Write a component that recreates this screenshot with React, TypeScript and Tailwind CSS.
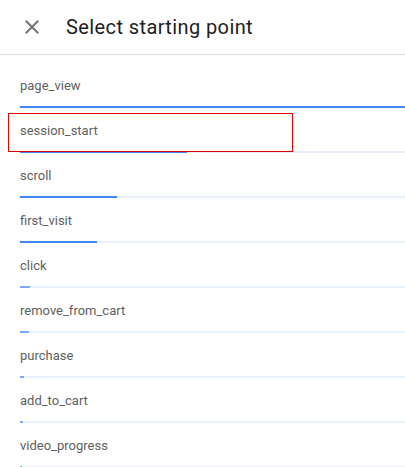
import { useState } from "react";

type EventRow = {
  name: string;
  fill: number;
};

const events: EventRow[] = [
  { name: "page_view", fill: 385 },
  { name: "session_start", fill: 167 },
  { name: "scroll", fill: 97 },
  { name: "first_visit", fill: 77 },
  { name: "click", fill: 10 },
  { name: "remove_from_cart", fill: 9 },
  { name: "purchase", fill: 4 },
  { name: "add_to_cart", fill: 3 },
  { name: "video_progress", fill: 2 },
];

const CloseIcon = () => (
  <svg viewBox="0 0 24 24" className="h-6 w-6 fill-[#757575]">
    <path d="M19 6.41 17.59 5 12 10.59 6.41 5 5 6.41 10.59 12 5 17.59 6.41 19 12 13.41 17.59 19 19 17.59 13.41 12z" />
  </svg>
);

const EventItem = ({ row, active }: { row: EventRow; active: boolean }) => (
  <div className="relative flex flex-col pt-[13px] pl-5">
    {active && (
      <div className="pointer-events-none absolute left-2 top-[5px] h-[39px] w-[285px] border border-[#e00000]" />
    )}
    <span className="h-5 text-[13px] leading-5 text-[#616161]">{row.name}</span>
    <div className="mt-[10px] h-[2px] w-full bg-[#e8f0fe]">
      <div
        className={row.fill < 20 ? "h-full bg-[#7baaf7]" : "h-full bg-[#4285f4]"}
        style={{ width: row.fill }}
      />
    </div>
  </div>
);

export default function App() {
  const [selected] = useState("session_start");

  return (
    <div className="h-[467px] w-[405px] overflow-hidden bg-white font-['Roboto',sans-serif]">
      <div className="flex h-[55px] items-center border-b border-[#dadce0]">
        <button className="ml-5 flex h-6 w-6 items-center justify-center">
          <CloseIcon />
        </button>
        <h1 className="ml-[22px] text-[20px] leading-6 text-[#202124] tracking-[0.4px]">
          Select starting point
        </h1>
      </div>
      <div className="pt-2">
        {events.map((row) => (
          <EventItem key={row.name} row={row} active={row.name === selected} />
        ))}
      </div>
    </div>
  );
}
